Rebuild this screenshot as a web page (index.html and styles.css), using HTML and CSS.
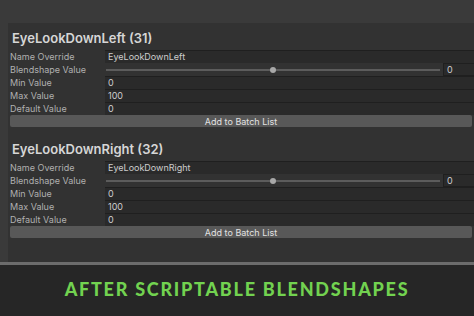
FILE: index.html
```html
<!DOCTYPE html>
<html lang="en">
<head>
<meta charset="UTF-8">
<title>Scriptable Blendshapes</title>
<link rel="stylesheet" href="styles.css">
</head>
<body>

<div class="top-bar"></div>

<div class="panel">
  <!-- blendshape 31 -->
  <div class="shape">
    <div class="shape-title">EyeLookDownLeft (31)</div>
    <div class="row">
      <div class="label">Name Override</div>
      <div class="field">EyeLookDownLeft</div>
    </div>
    <div class="row">
      <div class="label">Blendshape Value</div>
      <div class="slider">
        <div class="track"><span class="thumb" style="left:50%"></span></div>
        <div class="field num">0</div>
      </div>
    </div>
    <div class="row">
      <div class="label">Min Value</div>
      <div class="field">0</div>
    </div>
    <div class="row">
      <div class="label">Max Value</div>
      <div class="field">100</div>
    </div>
    <div class="row">
      <div class="label">Default Value</div>
      <div class="field">0</div>
    </div>
    <button class="batch-btn">Add to Batch List</button>
  </div>

  <!-- blendshape 32 -->
  <div class="shape">
    <div class="shape-title">EyeLookDownRight (32)</div>
    <div class="row">
      <div class="label">Name Override</div>
      <div class="field">EyeLookDownRight</div>
    </div>
    <div class="row">
      <div class="label">Blendshape Value</div>
      <div class="slider">
        <div class="track"><span class="thumb" style="left:50%"></span></div>
        <div class="field num">0</div>
      </div>
    </div>
    <div class="row">
      <div class="label">Min Value</div>
      <div class="field">0</div>
    </div>
    <div class="row">
      <div class="label">Max Value</div>
      <div class="field">100</div>
    </div>
    <div class="row">
      <div class="label">Default Value</div>
      <div class="field">0</div>
    </div>
    <button class="batch-btn">Add to Batch List</button>
  </div>
</div>

<div class="footer">After Scriptable Blendshapes</div>

</body>
</html>
```

FILE: styles.css
```css
:root{
  --bg:#3a3a3a;
  --panel:#323232;
  --field:#2a2a2a;
  --line:#1f1f1f;
  --label:#b0b0b0;
  --green:#72d250;
}
body{
  margin:0; background:var(--bg); font-family:Inter, "Noto Sans", sans-serif;
  width:474px; height:316px; overflow:hidden;
}
.top-bar{height:23px;}
.panel{
  margin-left:8px; height:239px; background:var(--panel);
  padding-top:6px; box-sizing:border-box;
}
.shape{margin-bottom:13px;}
.shape-title{
  height:18px; line-height:18px; margin:0 0 3px 4px;
  font-size:13px; font-weight:600; color:#d6d6d6;
}
.row{
  display:flex; height:13px; align-items:stretch;
}
.label{
  width:97px; padding-left:2px; box-sizing:border-box;
  font-size:9px; line-height:13px; color:var(--label);
}
.field{
  flex:1; background:var(--field);
  border-top:1px solid var(--line); box-sizing:border-box;
  font-size:9px; line-height:12px; color:#cdcdcd; padding-left:3px;
}
.slider{
  flex:1; display:flex; align-items:center;
}
.track{
  position:relative; width:334px; height:2px; background:#5c5c5c; margin-left:1px;
}
.thumb{
  position:absolute; top:-2px; width:6px; height:6px; margin-left:-3px;
  border-radius:50%; background:#a8a8a8;
}
.slider .num{
  height:13px; margin-left:3px; border:1px solid var(--line); border-right:0;
}
.batch-btn{
  display:block; width:462px; height:12px; margin:0 0 0 2px; padding:0;
  border:0; border-radius:2px; background:#585858;
  font-family:Inter, sans-serif; font-size:9px; color:#e2e2e2;
}
.footer{
  height:51px; border-top:3px solid #6c6c6c; background:#262626;
  text-align:center; line-height:48px;
  font-family:Lato, sans-serif; font-weight:900; font-size:18px;
  letter-spacing:1.75px; text-transform:uppercase; color:var(--green);
}
```
